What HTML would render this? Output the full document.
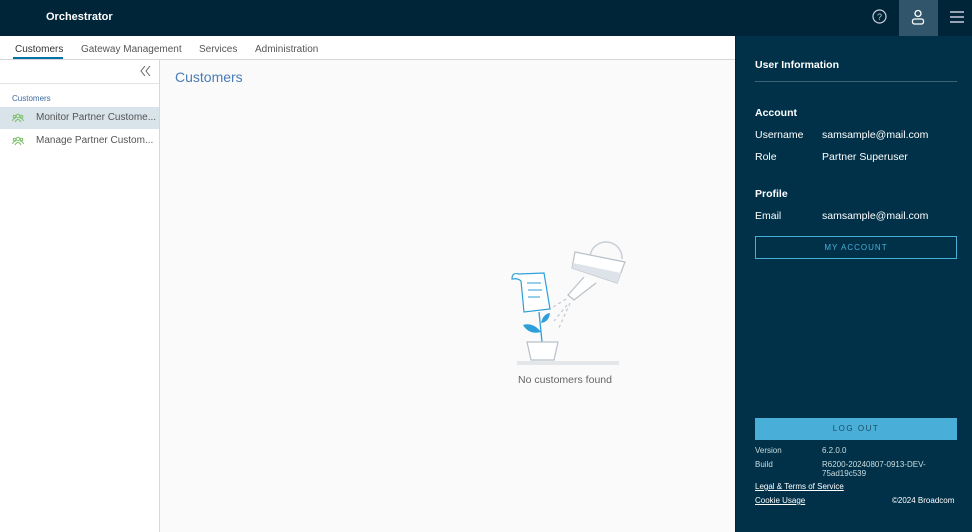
<!DOCTYPE html>
<html><head><style>
*{margin:0;padding:0;box-sizing:border-box}
body{width:972px;height:532px;overflow:hidden;font-family:"Liberation Sans",sans-serif;background:#fafafa;position:relative}
.top{position:absolute;left:0;top:0;width:972px;height:36px;background:#002538}
.brand{position:absolute;left:46px;top:11px;color:#fff;font-size:11px;font-weight:bold}
.tabs{position:absolute;left:0;top:36px;width:735px;height:24px;background:#fff;border-bottom:1px solid #d8d8d8}
.tab{position:absolute;top:7px;font-size:10px;color:#565656}
.side{position:absolute;left:0;top:60px;width:160px;height:472px;background:#fff;border-right:1px solid #d8d8d8}
.panel{position:absolute;left:735px;top:36px;width:237px;height:496px;background:#003149;color:#fff;border-left:1px solid #0a2030}
.p{position:absolute;font-size:10.5px}
.b{font-weight:bold}
</style></head><body>
<div class="top">
<div class="brand">Orchestrator</div>
<svg style="position:absolute;left:872px;top:9px" width="15" height="15" viewBox="0 0 15 15"><circle cx="7.5" cy="7.5" r="6.5" fill="none" stroke="#ccd" stroke-width="1.2"/><text x="7.5" y="11" font-size="9" fill="#ccd" text-anchor="middle" font-family="Liberation Sans">?</text></svg>
<div style="position:absolute;left:899px;top:0;width:39px;height:36px;background:#31566b"></div>
<svg style="position:absolute;left:911px;top:9px" width="14" height="16" viewBox="0 0 14 16"><circle cx="7" cy="4.5" r="3" fill="none" stroke="#fff" stroke-width="1.3"/><rect x="1.5" y="10" width="11" height="5" rx="2" fill="none" stroke="#fff" stroke-width="1.3"/></svg>
<svg style="position:absolute;left:950px;top:11px" width="14" height="12"><path d="M0 1h14M0 6h14M0 11h14" stroke="#ccd" stroke-width="1.4"/></svg>
</div>
<div class="tabs">
<div class="tab" style="left:15px;top:8px;color:#333">Customers</div>
<div style="position:absolute;left:13px;top:21px;width:50px;height:2px;background:#0072a3"></div>
<div class="tab" style="left:81px;top:8px">Gateway Management</div>
<div class="tab" style="left:199px;top:8px">Services</div>
<div class="tab" style="left:255px;top:8px">Administration</div>
</div>
<div class="side">
<svg style="position:absolute;left:140px;top:6px" width="11" height="10"><path d="M5 0L1 5L5 10M10 0L6 5L10 10" fill="none" stroke="#666" stroke-width="1"/></svg>
<div style="position:absolute;left:0;top:23px;width:159px;height:1px;background:#e3e3e3"></div>
<div style="position:absolute;left:12px;top:34px;font-size:8px;color:#3b6aa0">Customers</div>
<div style="position:absolute;left:0;top:47px;width:159px;height:22px;background:#d9e3ea"></div>
<svg style="position:absolute;left:12px;top:53px" width="12" height="10"><g fill="none" stroke="#7bbf6a" stroke-width="1"><circle cx="6" cy="3" r="1.8"/><circle cx="2.5" cy="3.5" r="1.3"/><circle cx="9.5" cy="3.5" r="1.3"/><path d="M3 9q3-5 6 0M0.5 8q1-3 3-2.5M11.5 8q-1-3-3-2.5"/></g></svg>
<div style="position:absolute;left:36px;top:52px;font-size:10px;color:#555">Monitor Partner Custome...</div>
<svg style="position:absolute;left:12px;top:76px" width="12" height="10"><g fill="none" stroke="#7bbf6a" stroke-width="1"><circle cx="6" cy="3" r="1.8"/><circle cx="2.5" cy="3.5" r="1.3"/><circle cx="9.5" cy="3.5" r="1.3"/><path d="M3 9q3-5 6 0M0.5 8q1-3 3-2.5M11.5 8q-1-3-3-2.5"/></g></svg>
<div style="position:absolute;left:36px;top:75px;font-size:10px;color:#555">Manage Partner Custom...</div>
</div>
<div style="position:absolute;left:175px;top:69px;font-size:14px;color:#4a7cb5">Customers</div>
<svg style="position:absolute;left:500px;top:233px" width="130" height="133" viewBox="0 0 130 133">
<path d="M90 24 a16 16 0 0 1 32 2" fill="none" stroke="#c8cfd6" stroke-width="1.5"/>
<path d="M75 19 L125 29 L117 50 L72 35 Z" fill="#fff" stroke="#b8c0c8" stroke-width="1.2"/>
<path d="M73 30 L121 40 L117 50 L72 35 Z" fill="#dde3e8"/>
<path d="M84 44 L68 62 L74 67 L96 50" fill="#fff" stroke="#b8c0c8" stroke-width="1.2"/>
<path d="M66 66 L50 76 M67 72 L54 88 M70 70 L58 97" stroke="#c0c8d0" stroke-dasharray="3 3" stroke-width="1.2"/>
<path d="M12 46 q0-7 7-5 L44 40 L50 76 L24 79 L21 48 q-3-3-9-2Z" fill="#fff" stroke="#2e9fd8" stroke-width="1.2"/>
<path d="M27 50h14M28 57h14M28 64h12" stroke="#2e9fd8" stroke-width="1"/>
<path d="M39 79 L42 109" stroke="#2e9fd8" stroke-width="1.3"/>
<path d="M41 99 q-8-10-18-7 q6 10 18 7Z M41 90 q2-9 9-10 q-1 9 -9 10Z" fill="#2e9fd8"/>
<path d="M27 109 H58 L54 127 H31 Z" fill="#fff" stroke="#b8c0c8" stroke-width="1.2"/>
<rect x="17" y="128" width="102" height="4" fill="#e3e7ea"/>
</svg>
<div style="position:absolute;left:518px;top:374px;font-size:10.5px;color:#666">No customers found</div>
<div class="panel">
<div class="p b" style="left:19px;top:23px">User Information</div>
<div style="position:absolute;left:19px;top:45px;width:202px;height:1px;background:#3d6376"></div>
<div class="p b" style="left:19px;top:71px">Account</div>
<div class="p" style="left:19px;top:93px">Username</div><div class="p" style="left:86px;top:93px">samsample@mail.com</div>
<div class="p" style="left:19px;top:115px">Role</div><div class="p" style="left:86px;top:115px">Partner Superuser</div>
<div class="p b" style="left:19px;top:152px">Profile</div>
<div class="p" style="left:19px;top:174px">Email</div><div class="p" style="left:86px;top:174px">samsample@mail.com</div>
<div style="position:absolute;left:19px;top:200px;width:202px;height:23px;border:1px solid #49afd9;color:#49afd9;font-size:8px;letter-spacing:1px;text-align:center;line-height:21px">MY ACCOUNT</div>
<div style="position:absolute;left:19px;top:382px;width:202px;height:22px;background:#49afd9;color:#1e4a5e;font-size:8px;letter-spacing:1.5px;text-align:center;line-height:22px">LOG OUT</div>
<div class="p" style="left:19px;top:410px;font-size:8px;color:#cdd">Version</div><div class="p" style="left:86px;top:410px;font-size:8px;color:#cdd">6.2.0.0</div>
<div class="p" style="left:19px;top:424px;font-size:8px;color:#cdd">Build</div><div class="p" style="left:86px;top:424px;font-size:8px;color:#cdd;line-height:9px">R6200-20240807-0913-DEV-<br>75ad19c539</div>
<div class="p" style="left:19px;top:446px;font-size:8px;text-decoration:underline">Legal &amp; Terms of Service</div>
<div class="p" style="left:19px;top:460px;font-size:8px;text-decoration:underline">Cookie Usage</div>
<div class="p" style="left:156px;top:460px;font-size:8px">©2024 Broadcom</div>
</div>
</body></html>
